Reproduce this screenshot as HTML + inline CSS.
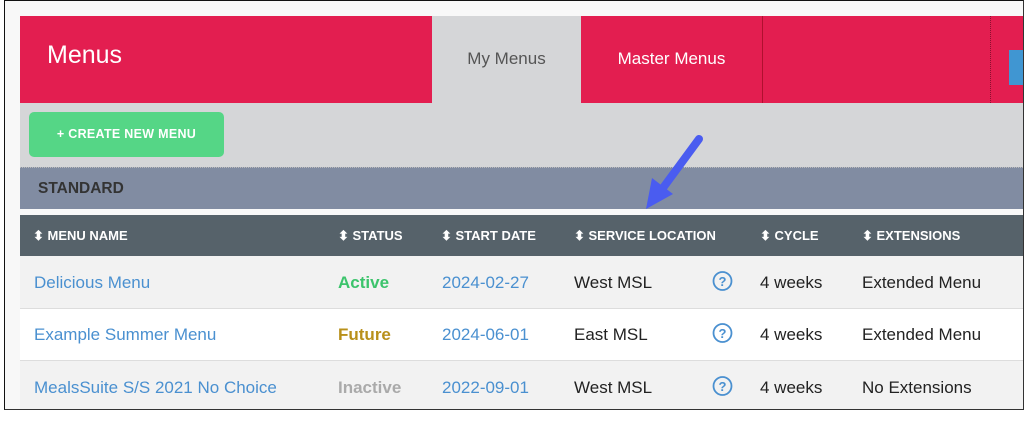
<!DOCTYPE html>
<html><head><style>
*{margin:0;padding:0;box-sizing:border-box}
body{width:1033px;height:423px;background:#fff;position:relative;overflow:hidden;font-family:"Liberation Sans",sans-serif}
.frame{position:absolute;left:4px;top:0;width:1020px;height:410px;background:#f8f8f8;border-left:1px solid #111;border-top:1px solid #111;border-bottom:1px solid #333;border-right:1px solid #333}
.a{position:absolute}
.hdr{left:20px;top:16px;width:1003px;height:87px;background:#e31e50}
.t{color:#fff;font-size:25px;left:47px;top:41px}
.tab{left:432px;top:16px;width:149px;height:87px;background:#d5d6d8;color:#555;font-size:17px;text-align:center;line-height:85px}
.mm{left:581px;top:16px;width:182px;height:87px;border-right:1px solid #b0102f;color:#fff;font-size:17px;text-align:center;line-height:85px}
.gray{left:20px;top:103px;width:1003px;height:64px;background:#d5d6d8}
.btn{left:29px;top:112px;width:195px;height:45px;background:#55d686;border-radius:5px;color:#fff;font-size:12.5px;font-weight:bold;text-align:center;line-height:44px;letter-spacing:.3px}
.std{left:20px;top:167px;width:1003px;height:42px;background:#818ca2;color:#333;font-size:15.5px;font-weight:bold;padding-left:18px;line-height:42px;border-top:1px dotted #bbb}
.th{left:20px;top:215px;width:1003px;height:41px;background:#56626a}
.h{color:#fff;font-size:13px;font-weight:bold;top:228px}
.row{left:20px;width:1003px;border-bottom:1px solid #ddd}
.c{font-size:17px;top:0}
.blue{color:#4a90d0}
</style></head><body>
<div class="frame"></div>
<div class="a hdr"></div>
<div class="a t">Menus</div>
<div class="a tab">My Menus</div>
<div class="a mm">Master Menus</div>
<div class="a" style="left:990px;top:16px;height:87px;border-left:1px dotted #8a1030"></div>
<div class="a" style="left:1009px;top:50px;width:14px;height:35px;background:#4096d2"></div>
<div class="a gray"></div>
<div class="a btn">+ CREATE NEW MENU</div>
<div class="a std">STANDARD</div>
<div class="a th"></div>
<div class="a h" style="left:33px">⬍ MENU NAME</div>
<div class="a h" style="left:338px">⬍ STATUS</div>
<div class="a h" style="left:441px">⬍ START DATE</div>
<div class="a h" style="left:574px">⬍ SERVICE LOCATION</div>
<div class="a h" style="left:760px">⬍ CYCLE</div>
<div class="a h" style="left:862px">⬍ EXTENSIONS</div>

<div class="a row" style="top:256px;height:53px;background:#f2f2f2"></div>
<div class="a row" style="top:309px;height:52px;background:#fff"></div>
<div class="a row" style="top:361px;height:48px;background:#f2f2f2;border:none"></div>

<div class="a c blue" style="left:34px;top:273px">Delicious Menu</div>
<div class="a c" style="left:338px;top:273px;color:#3cc46c;font-weight:bold">Active</div>
<div class="a c blue" style="left:442px;top:273px">2024-02-27</div>
<div class="a c" style="left:574px;top:273px;color:#222">West MSL</div>
<div class="a c" style="left:760px;top:273px;color:#222">4 weeks</div>
<div class="a c" style="left:862px;top:273px;color:#222">Extended Menu</div>

<div class="a c blue" style="left:34px;top:325px">Example Summer Menu</div>
<div class="a c" style="left:338px;top:325px;color:#b8901a;font-weight:bold">Future</div>
<div class="a c blue" style="left:442px;top:325px">2024-06-01</div>
<div class="a c" style="left:574px;top:325px;color:#222">East MSL</div>
<div class="a c" style="left:760px;top:325px;color:#222">4 weeks</div>
<div class="a c" style="left:862px;top:325px;color:#222">Extended Menu</div>

<div class="a c blue" style="left:34px;top:378px">MealsSuite S/S 2021 No Choice</div>
<div class="a c" style="left:338px;top:378px;color:#aaa;font-weight:bold">Inactive</div>
<div class="a c blue" style="left:442px;top:378px">2022-09-01</div>
<div class="a c" style="left:574px;top:378px;color:#222">West MSL</div>
<div class="a c" style="left:760px;top:378px;color:#222">4 weeks</div>
<div class="a c" style="left:862px;top:378px;color:#222">No Extensions</div>

<svg class="a" style="left:0;top:0" width="1033" height="423">
<g fill="none" stroke="#4a90d0" stroke-width="1.8">
<circle cx="722.5" cy="281" r="9"/><circle cx="722.5" cy="333" r="9"/><circle cx="722.5" cy="386" r="9"/>
</g>
<g fill="#4a90d0" font-family="Liberation Sans" font-weight="bold" font-size="13" text-anchor="middle">
<text x="722.5" y="286">?</text><text x="722.5" y="338">?</text><text x="722.5" y="391">?</text>
</g>
<line x1="699" y1="139" x2="660" y2="192" stroke="#4a5cf0" stroke-width="8" stroke-linecap="round"/>
<polygon points="646,209 652,178 673,194" fill="#4a5cf0"/>
</svg>
</body></html>
